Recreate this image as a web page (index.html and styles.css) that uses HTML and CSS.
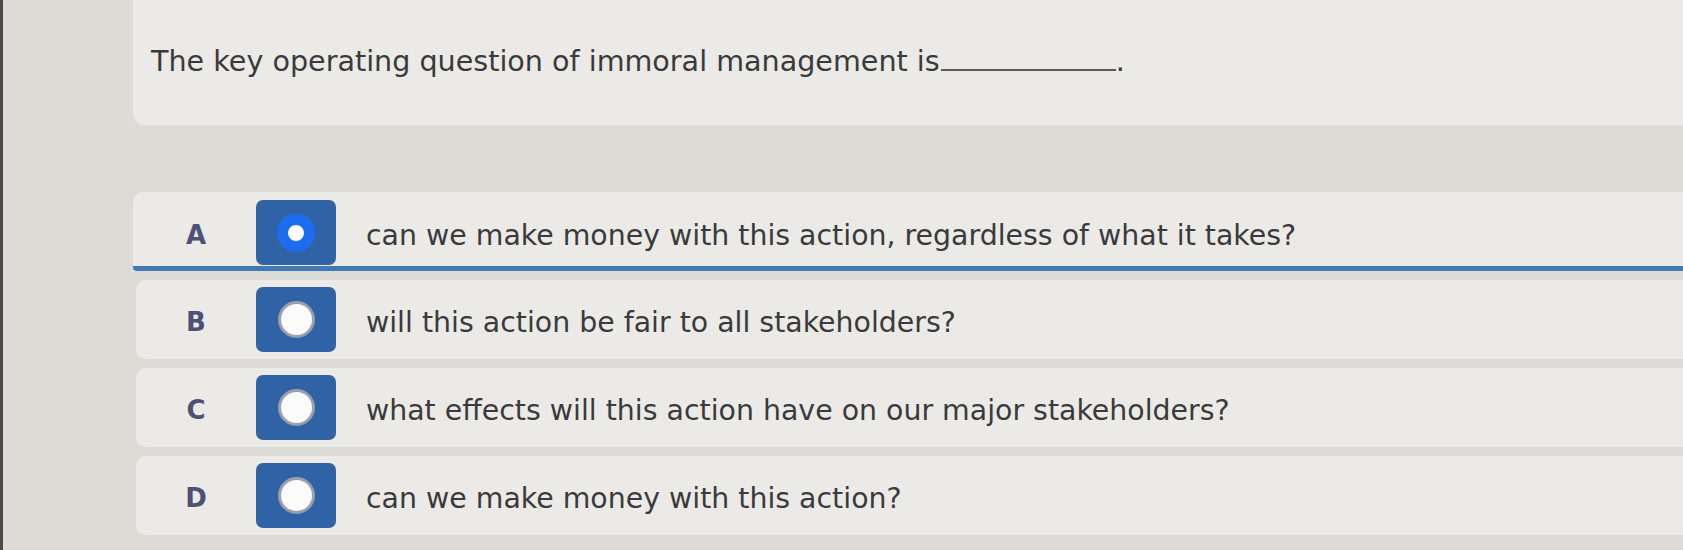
FILE: index.html
```html
<!DOCTYPE html>
<html lang="en">
  <head>
    <meta charset="UTF-8" />
    <title>Question</title>
    <link rel="stylesheet" href="styles.css">
  </head>
  <body>
    <div class="page">
      <div class="question">
        The key operating question of immoral management is<span class="blank"></span>.
      </div>

      <div class="options">
        <div class="option selected">
          <div class="letter">A</div>
          <div class="radio"><span class="dot"></span></div>
          <div class="text">can we make money with this action, regardless of what it takes?</div>
        </div>
        <div class="option">
          <div class="letter">B</div>
          <div class="radio"><span class="dot"></span></div>
          <div class="text">will this action be fair to all stakeholders?</div>
        </div>
        <div class="option">
          <div class="letter">C</div>
          <div class="radio"><span class="dot"></span></div>
          <div class="text">what effects will this action have on our major stakeholders?</div>
        </div>
        <div class="option">
          <div class="letter">D</div>
          <div class="radio"><span class="dot"></span></div>
          <div class="text">can we make money with this action?</div>
        </div>
      </div>
    </div>
  </body>
</html>
```

FILE: styles.css
```css
body {
  margin: 0;
  height: 550px;
  overflow: hidden;
  background: #dddbd6;
  border-left: 3px solid #4a4a4a;
  font-family: "DejaVu Sans", Verdana, sans-serif;
  color: #3a3a3c;
}

.page {
  margin-left: 130px;
}

.question {
  background: #ebeae6;
  border-radius: 0 0 0 12px;
  height: 125px;
  box-sizing: border-box;
  padding: 44px 0 0 18px;
  font-size: 28.6px;
  line-height: 34px;
}

.blank {
  display: inline-block;
  width: 175px;
  margin-left: 1px;
  border-bottom: 2px solid #5a5a5a;
}

.options {
  display: flex;
  flex-direction: column;
  gap: 9px;
  margin-top: 67px;
}

.option {
  display: flex;
  align-items: center;
  height: 79px;
  box-sizing: border-box;
  padding: 7px 0;
  margin-left: 3px;
  background: #ebeae6;
  border-radius: 10px 0 0 10px;
}

.option.selected {
  margin-left: 0;
  padding: 8px 0 1px 3px;
  border-bottom: 5px solid #4079b4;
  border-radius: 10px 0 0 4px;
}

.letter {
  width: 120px;
  padding-top: 4px;
  text-align: center;
  font-weight: bold;
  font-size: 26px;
  color: #4d5176;
}

.radio {
  width: 80px;
  height: 65px;
  flex-shrink: 0;
  background: #2f63a6;
  border-radius: 7px;
  display: flex;
  justify-content: center;
  align-items: center;
}

.dot {
  width: 31px;
  height: 31px;
  border-radius: 50%;
  background: #fbfbfb;
  border: 3px solid #9aa0ab;
}

.selected .dot {
  width: 16px;
  height: 16px;
  background: #ffffff;
  border: 11px solid #1c6cf0;
}

.text {
  margin-left: 30px;
  padding-top: 6px;
  font-size: 28.4px;
  line-height: 34px;
  white-space: nowrap;
}
```
